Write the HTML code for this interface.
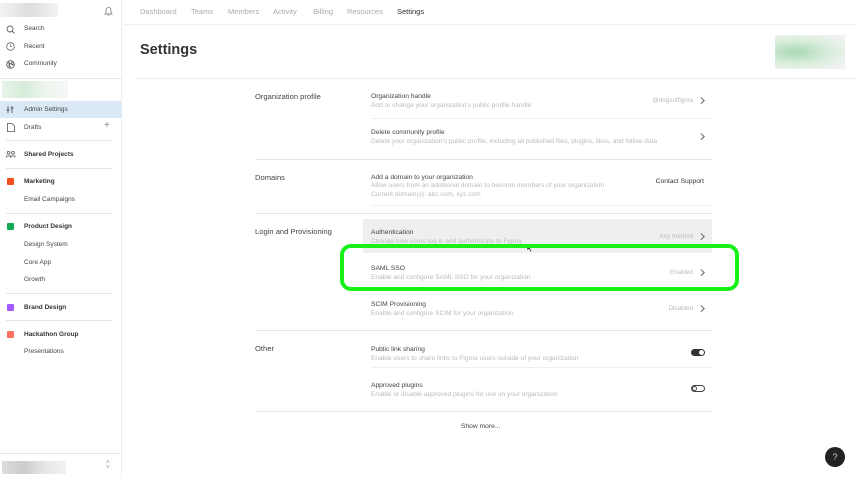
<!DOCTYPE html>
<html><head><meta charset="utf-8"><style>
*{margin:0;padding:0;box-sizing:border-box}
body{width:857px;height:478px;background:#fff;font-family:"Liberation Sans",sans-serif;position:relative;overflow:hidden;color:#333}
.a{position:absolute;white-space:nowrap}
.sb{font-size:6.5px;color:#444}
.b{font-weight:bold;color:#333}
.hl{position:absolute;background:#e6e6e6;height:1px}
.nav{font-size:7.5px;color:#aaa;top:7px}
.t{font-size:6.7px;color:#444}
.s{font-size:6.6px;color:#bbb}
.lab{font-size:7.6px;color:#444}
.sq{position:absolute;width:7px;height:7px;border-radius:1px;left:7px}
.chev{position:absolute;left:699px;width:4.5px;height:4.5px;border-top:1px solid #666;border-right:1px solid #666;transform:rotate(45deg)}
.r{font-size:6.3px;color:#bbb;text-align:right;right:164px}
</style></head><body>
<div class="a" style="left:0;top:0;width:122px;height:478px;border-right:1px solid #eee"></div>
<div class="a" style="left:0;top:3px;width:58px;height:14px;background:linear-gradient(90deg,#f3f3f3,#ddd,#f3f3f3)"></div>
<svg class="a" style="left:104px;top:6px" width="9" height="10" viewBox="0 0 9 10"><path d="M2 7V4a2.5 2.5 0 015 0v3l1 1H1z M3.5 9h2" fill="none" stroke="#777" stroke-width=".8"/></svg>
<svg class="a" style="left:6px;top:25px" width="9" height="9"><circle cx="4" cy="4" r="3" fill="none" stroke="#666" stroke-width=".9"/><path d="M6 6l2.5 2.5" stroke="#666" stroke-width=".9"/></svg>
<div class="a sb" style="left:24px;top:25px">Search</div>
<svg class="a" style="left:6px;top:42px" width="9" height="9"><circle cx="4.5" cy="4.5" r="3.8" fill="none" stroke="#666" stroke-width=".8"/><path d="M4.5 2.5v2h1.5" fill="none" stroke="#666" stroke-width=".8"/></svg>
<div class="a sb" style="left:24px;top:43px">Recent</div>
<svg class="a" style="left:6px;top:60px" width="9" height="9"><circle cx="4.5" cy="4.5" r="3.8" fill="none" stroke="#555" stroke-width=".9"/><path d="M2 2.5l2 1-1 2 1.5 2M6 2l-.5 2 2 1" fill="none" stroke="#555" stroke-width="1.2"/></svg>
<div class="a sb" style="left:24px;top:60px">Community</div>
<div class="hl" style="left:0;top:78px;width:122px"></div>
<div class="a" style="left:2px;top:81px;width:66px;height:17px;background:linear-gradient(90deg,#e9f3ea,#d6ecd8,#eef5ee,#f6f6f6)"></div>
<div class="a" style="left:0;top:101px;width:122px;height:17px;background:#dbe8f5"></div>
<svg class="a" style="left:6px;top:105px" width="9" height="9"><path d="M2 1v7M6 1v7M0.5 5h3M4.5 3h3" stroke="#556" stroke-width=".9"/></svg>
<div class="a sb" style="left:24px;top:106px">Admin Settings</div>
<svg class="a" style="left:7px;top:123px" width="8" height="9"><path d="M.5.5h4.5l2.5 2.5v5.5h-7z" fill="none" stroke="#555" stroke-width=".8"/></svg>
<div class="a sb" style="left:24px;top:124px">Drafts</div>
<div class="a" style="left:104px;top:120px;font-size:10px;color:#888">+</div>
<div class="hl" style="left:6px;top:140px;width:107px"></div>
<svg class="a" style="left:6px;top:151px" width="10" height="7"><g fill="none" stroke="#555" stroke-width=".8"><circle cx="2.5" cy="1.8" r="1.4"/><circle cx="7" cy="1.8" r="1.4"/><path d="M.5 6.5V5h4v1.5M5 6.5V5h4v1.5"/></g></svg>
<div class="a sb b" style="left:24px;top:151px">Shared Projects</div>
<div class="hl" style="left:6px;top:168px;width:107px"></div>
<div class="sq" style="top:178px;background:#f24e1e"></div>
<div class="a sb b" style="left:24px;top:178px">Marketing</div>
<div class="a sb" style="left:24px;top:196px">Email Campaigns</div>
<div class="hl" style="left:6px;top:213px;width:107px"></div>
<div class="sq" style="top:223px;background:#0fa958"></div>
<div class="a sb b" style="left:24px;top:223px">Product Design</div>
<div class="a sb" style="left:24px;top:241px">Design System</div>
<div class="a sb" style="left:24px;top:259px">Core App</div>
<div class="a sb" style="left:24px;top:276px">Growth</div>
<div class="hl" style="left:6px;top:293px;width:107px"></div>
<div class="sq" style="top:304px;background:#a259ff"></div>
<div class="a sb b" style="left:24px;top:304px">Brand Design</div>
<div class="hl" style="left:6px;top:320px;width:107px"></div>
<div class="sq" style="top:331px;background:#ff7262"></div>
<div class="a sb b" style="left:24px;top:331px">Hackathon Group</div>
<div class="a sb" style="left:24px;top:348px">Presentations</div>
<div class="hl" style="left:0;top:453px;width:122px"></div>
<div class="a" style="left:2px;top:461px;width:64px;height:13px;background:linear-gradient(90deg,#ddd,#ccc,#e6e6e6,#f3f3f3)"></div>
<div class="a" style="left:106px;top:461px;font-size:6px;color:#888;line-height:5px">˄<br>˅</div>
<div class="a nav" style="left:140px">Dashboard</div>
<div class="a nav" style="left:191px">Teams</div>
<div class="a nav" style="left:228px">Members</div>
<div class="a nav" style="left:273px">Activity</div>
<div class="a nav" style="left:313px">Billing</div>
<div class="a nav" style="left:347px">Resources</div>
<div class="a nav" style="left:397px;color:#333">Settings</div>
<div class="hl" style="left:123px;top:24px;width:734px;background:#f0f0f0"></div>
<div class="a" style="left:140px;top:42px;font-size:14.5px;font-weight:bold;color:#333">Settings</div>
<div class="a" style="left:775px;top:35px;width:70px;height:34px;background:radial-gradient(ellipse at 30% 50%,#a9d8b4,#dbeedd 50%,#f2f2f2 90%)"></div>
<div class="hl" style="left:135px;top:78px;width:722px;background:#eee"></div>
<div class="a lab" style="left:255px;top:92px">Organization profile</div>
<div class="a t" style="left:371px;top:93px">Organization handle</div>
<div class="a s" style="left:371px;top:102px">Add or change your organization's public profile handle</div>
<div class="a r" style="top:97px">@dogsoffigma</div>
<div class="chev" style="top:98px"></div>
<div class="hl" style="left:371px;top:118px;width:341px;background:#f0f0f0"></div>
<div class="a t" style="left:371px;top:129px">Delete community profile</div>
<div class="a s" style="left:371px;top:138px">Delete your organization's public profile, including all published files, plugins, likes, and follow data</div>
<div class="chev" style="top:134px"></div>
<div class="hl" style="left:255px;top:159px;width:457px"></div>
<div class="a lab" style="left:255px;top:173px">Domains</div>
<div class="a t" style="left:371px;top:174px">Add a domain to your organization</div>
<div class="a s" style="left:371px;top:182px">Allow users from an additional domain to become members of your organization</div>
<div class="a s" style="left:371px;top:191px">Current domain(s): abc.com, xyz.com</div>
<div class="a t" style="right:153px;top:178px;color:#333">Contact Support</div>
<div class="hl" style="left:371px;top:205px;width:341px;background:#f0f0f0"></div>
<div class="hl" style="left:255px;top:213px;width:457px"></div>
<div class="a lab" style="left:255px;top:227px">Login and Provisioning</div>
<div class="a" style="left:363px;top:219px;width:349px;height:34px;background:#efefef"></div>
<div class="a t" style="left:371px;top:229px">Authentication</div>
<div class="a s" style="left:371px;top:238px">Change how users log in and authenticate to Figma</div>
<div class="a r" style="top:233px">Any method</div>
<div class="chev" style="top:234px"></div>
<svg class="a" style="left:526px;top:242px" width="8" height="11"><path d="M1 1v8l2-2 1.5 3 1.3-.6-1.5-3H7z" fill="#222" stroke="#fff" stroke-width=".6"/></svg>
<div class="a t" style="left:371px;top:265px">SAML SSO</div>
<div class="a s" style="left:371px;top:274px">Enable and configure SAML SSO for your organization</div>
<div class="a r" style="top:269px">Enabled</div>
<div class="chev" style="top:270px"></div>
<div class="a t" style="left:371px;top:301px">SCIM Provisioning</div>
<div class="a s" style="left:371px;top:310px">Enable and configure SCIM for your organization</div>
<div class="a r" style="top:305px">Disabled</div>
<div class="chev" style="top:306px"></div>
<div class="a" style="left:340px;top:244px;width:399px;height:47px;border:4px solid #19f019;border-radius:11px"></div>
<div class="hl" style="left:255px;top:330px;width:457px"></div>
<div class="a lab" style="left:255px;top:344px">Other</div>
<div class="a t" style="left:371px;top:346px">Public link sharing</div>
<div class="a s" style="left:371px;top:355px">Enable users to share links to Figma users outside of your organization</div>
<div class="a" style="left:691px;top:349px;width:14px;height:7px;border-radius:4px;background:#333"></div>
<div class="a" style="left:699px;top:350px;width:5px;height:5px;border-radius:50%;background:#fff"></div>
<div class="hl" style="left:371px;top:367px;width:341px;background:#f0f0f0"></div>
<div class="a t" style="left:371px;top:382px">Approved plugins</div>
<div class="a s" style="left:371px;top:391px">Enable or disable approved plugins for use on your organization</div>
<div class="a" style="left:691px;top:385px;width:14px;height:7px;border-radius:4px;border:1px solid #444"></div>
<div class="a" style="left:692px;top:386px;width:5px;height:5px;border-radius:50%;border:1px solid #444"></div>
<div class="hl" style="left:255px;top:411px;width:457px"></div>
<div class="a t" style="left:461px;top:423px;color:#444">Show more...</div>
<div class="a" style="left:825px;top:447px;width:20px;height:20px;border-radius:50%;background:#222;color:#ccc;font-size:9px;text-align:center;line-height:20px">?</div>
</body></html>
